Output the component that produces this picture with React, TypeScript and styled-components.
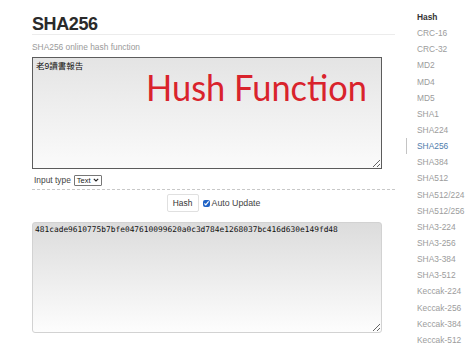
import React from "react";
import styled, { createGlobalStyle } from "styled-components";

const Global = createGlobalStyle`
  html, body { margin: 0; padding: 0; overflow: hidden; background: #fff; }
  body { font-family: "Liberation Sans", Arial, sans-serif; }
`;

const Page = styled.div`
  display: flex;
  align-items: flex-start;
  padding-left: 32px;
  width: 474px;
  height: 347px;
  box-sizing: border-box;
  overflow: hidden;
`;

const Main = styled.div`
  width: 363px;
  display: flex;
  flex-direction: column;
`;

const Title = styled.h1`
  margin: 15px 0 0;
  font-size: 18px;
  line-height: 19px;
  font-weight: 700;
  color: #2a2a2a;
  letter-spacing: -0.4px;
  border-bottom: 1px solid #ececec;
`;

const Subtitle = styled.div`
  margin-top: 6px;
  font-size: 8.4px;
  line-height: 12px;
  color: #9a9a9a;
`;

const AreaWrap = styled.div<{ $top: number }>`
  position: relative;
  margin-top: ${(p) => p.$top}px;
  width: 350px;
`;

const Area = styled.textarea<{ $dark?: boolean }>`
  display: block;
  width: 350px;
  height: ${(p) => (p.$dark ? 112 : 111)}px;
  box-sizing: border-box;
  margin: 0;
  padding: ${(p) => (p.$dark ? "3px 3px" : "2px 2px")};
  border: 1px solid ${(p) => (p.$dark ? "#5c5c5c" : "#d2d2d2")};
  border-radius: ${(p) => (p.$dark ? 0 : 3)}px;
  background: linear-gradient(
    ${(p) => (p.$dark ? "#e4e4e4" : "#dcdcdc")},
    ${(p) => (p.$dark ? "#fbfbfb" : "#fdfdfd")}
  );
  font-family: ${(p) =>
    p.$dark
      ? '"Liberation Sans", "Noto Sans CJK TC", sans-serif'
      : '"DejaVu Sans Mono", "Liberation Mono", monospace'};
  font-size: ${(p) => (p.$dark ? 8.5 : 7.87)}px;
  line-height: 10px;
  color: #111;
  outline: none;
  resize: both;
`;

const Overlay = styled.div`
  position: absolute;
  left: 114px;
  top: 8px;
  font-family: Lato, "Open Sans", sans-serif;
  font-size: 37px;
  line-height: 44px;
  color: #d9232c;
  white-space: nowrap;
  transform-origin: left center;
  transform: scaleX(0.93);
  pointer-events: none;
`;

const InputRow = styled.div`
  margin-top: 5px;
  margin-left: 2px;
  display: flex;
  align-items: center;
  gap: 3px;
  height: 12px;
  font-size: 8.4px;
  color: #444;
`;

const SelectBox = styled.span`
  display: inline-flex;
  align-items: center;
  gap: 2px;
  height: 9px;
  padding: 0 2px 0 2px;
  border: 1px solid #777;
  border-radius: 1px;
  background: #fff;
  font-size: 7.5px;
  line-height: 9px;
  color: #222;
`;

const Divider = styled.div`
  margin-top: 3px;
  border-top: 1px dashed #c8c8c8;
`;

const ActionRow = styled.div`
  margin-top: 4px;
  display: flex;
  justify-content: center;
  align-items: center;
  gap: 4px;
`;

const HashButton = styled.button`
  height: 18px;
  width: 32px;
  padding: 0;
  background: #fff;
  border: 1px solid #e0e0e0;
  border-radius: 2px;
  font-family: "Liberation Sans", Arial, sans-serif;
  font-size: 8.4px;
  color: #333;
`;

const CheckLabel = styled.label`
  display: flex;
  align-items: center;
  gap: 2px;
  font-size: 8.8px;
  color: #444;
`;

const Check = styled.input`
  width: 7px;
  height: 7px;
  margin: 0;
  accent-color: #1f63c6;
`;

const Sidebar = styled.nav`
  margin-left: 11px;
  padding-top: 9px;
  display: flex;
  flex-direction: column;
`;

const NavItem = styled.div<{ $head?: boolean; $active?: boolean }>`
  height: 16.15px;
  line-height: 16.15px;
  padding-left: 10px;
  border-left: 1px solid ${(p) => (p.$active ? "#c4c4c4" : "transparent")};
  font-size: 8.4px;
  font-weight: ${(p) => (p.$head ? 700 : 400)};
  color: ${(p) => (p.$head ? "#333" : p.$active ? "#4f7cac" : "#9c9c9c")};
  white-space: nowrap;
`;

const items = [
  "CRC-16",
  "CRC-32",
  "MD2",
  "MD4",
  "MD5",
  "SHA1",
  "SHA224",
  "SHA256",
  "SHA384",
  "SHA512",
  "SHA512/224",
  "SHA512/256",
  "SHA3-224",
  "SHA3-256",
  "SHA3-384",
  "SHA3-512",
  "Keccak-224",
  "Keccak-256",
  "Keccak-384",
  "Keccak-512",
];

export default function App() {
  return (
    <>
      <Global />
      <Page>
        <Main>
          <Title>SHA256</Title>
          <Subtitle>SHA256 online hash function</Subtitle>
          <AreaWrap $top={4}>
            <Area $dark defaultValue="老9讀書報告" />
            <Overlay>Hush Function</Overlay>
          </AreaWrap>
          <InputRow>
            Input type
            <SelectBox role="combobox">
              Text
              <svg width="6" height="4" viewBox="0 0 6 4">
                <path d="M0.8 0.8 L3 3 L5.2 0.8" fill="none" stroke="#222" strokeWidth="1.1" />
              </svg>
            </SelectBox>
          </InputRow>
          <Divider />
          <ActionRow>
            <HashButton>Hash</HashButton>
            <CheckLabel>
              <Check type="checkbox" defaultChecked />
              Auto Update
            </CheckLabel>
          </ActionRow>
          <AreaWrap $top={10}>
            <Area
              readOnly
              defaultValue="481cade9610775b7bfe047610099620a0c3d784e1268037bc416d630e149fd48"
            />
          </AreaWrap>
        </Main>
        <Sidebar>
          <NavItem $head>Hash</NavItem>
          {items.map((it) => (
            <NavItem key={it} $active={it === "SHA256"}>
              {it}
            </NavItem>
          ))}
        </Sidebar>
      </Page>
    </>
  );
}
